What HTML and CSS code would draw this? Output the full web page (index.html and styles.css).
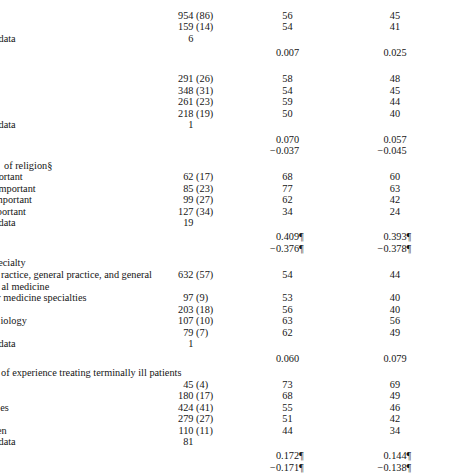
FILE: index.html
```html
<!DOCTYPE html>
<html lang="en">
<head>
<meta charset="utf-8">
<title>Table</title>
<link rel="stylesheet" href="styles.css">
</head>
<body>
<div class="sheet">
  <div class="table">

    <section class="group first">
      <div class="row"><div class="lbl"></div><div class="n">954</div><div class="pct">(86)</div><div class="v">56</div><div class="v">45</div></div>
      <div class="row"><div class="lbl"></div><div class="n">159</div><div class="pct">(14)</div><div class="v">54</div><div class="v">41</div></div>
      <div class="row"><div class="lbl l-data">data</div><div class="n">6</div><div class="pct"></div><div class="v"></div><div class="v"></div></div>
      <div class="stats">
        <div class="row"><div class="lbl"></div><div class="n"></div><div class="pct"></div><div class="v">0.007</div><div class="v">0.025</div></div>
      </div>
    </section>

    <section class="group">
      <div class="title"></div>
      <div class="row"><div class="lbl"></div><div class="n">291</div><div class="pct">(26)</div><div class="v">58</div><div class="v">48</div></div>
      <div class="row"><div class="lbl"></div><div class="n">348</div><div class="pct">(31)</div><div class="v">54</div><div class="v">45</div></div>
      <div class="row"><div class="lbl"></div><div class="n">261</div><div class="pct">(23)</div><div class="v">59</div><div class="v">44</div></div>
      <div class="row"><div class="lbl"></div><div class="n">218</div><div class="pct">(19)</div><div class="v">50</div><div class="v">40</div></div>
      <div class="row"><div class="lbl l-data">data</div><div class="n">1</div><div class="pct"></div><div class="v"></div><div class="v"></div></div>
      <div class="stats">
        <div class="row"><div class="lbl"></div><div class="n"></div><div class="pct"></div><div class="v">0.070</div><div class="v">0.057</div></div>
        <div class="row"><div class="lbl"></div><div class="n"></div><div class="pct"></div><div class="v"><span class="neg">−</span>0.037</div><div class="v"><span class="neg">−</span>0.045</div></div>
      </div>
    </section>

    <section class="group">
      <div class="title t-religion">of religion§</div>
      <div class="row"><div class="lbl l-r1">portant</div><div class="n">62</div><div class="pct">(17)</div><div class="v">68</div><div class="v">60</div></div>
      <div class="row"><div class="lbl l-r2">mportant</div><div class="n">85</div><div class="pct">(23)</div><div class="v">77</div><div class="v">63</div></div>
      <div class="row"><div class="lbl l-r3">mportant</div><div class="n">99</div><div class="pct">(27)</div><div class="v">62</div><div class="v">42</div></div>
      <div class="row"><div class="lbl l-r4">portant</div><div class="n">127</div><div class="pct">(34)</div><div class="v">34</div><div class="v">24</div></div>
      <div class="row"><div class="lbl l-data">data</div><div class="n">19</div><div class="pct"></div><div class="v"></div><div class="v"></div></div>
      <div class="stats">
        <div class="row"><div class="lbl"></div><div class="n"></div><div class="pct"></div><div class="v">0.409<span class="mark">¶</span></div><div class="v">0.393<span class="mark">¶</span></div></div>
        <div class="row"><div class="lbl"></div><div class="n"></div><div class="pct"></div><div class="v"><span class="neg">−</span>0.376<span class="mark">¶</span></div><div class="v"><span class="neg">−</span>0.378<span class="mark">¶</span></div></div>
      </div>
    </section>

    <section class="group">
      <div class="title t-specialty">ecialty</div>
      <div class="row"><div class="lbl l-fp">ractice, general practice, and general<span class="cont">al medicine</span></div><div class="n">632</div><div class="pct">(57)</div><div class="v">54</div><div class="v">44</div></div>
      <div class="row"><div class="lbl l-med">r medicine specialties</div><div class="n">97</div><div class="pct">(9)</div><div class="v">53</div><div class="v">40</div></div>
      <div class="row"><div class="lbl"></div><div class="n">203</div><div class="pct">(18)</div><div class="v">56</div><div class="v">40</div></div>
      <div class="row"><div class="lbl l-iol">iology</div><div class="n">107</div><div class="pct">(10)</div><div class="v">63</div><div class="v">56</div></div>
      <div class="row"><div class="lbl"></div><div class="n">79</div><div class="pct">(7)</div><div class="v">62</div><div class="v">49</div></div>
      <div class="row"><div class="lbl l-data">data</div><div class="n">1</div><div class="pct"></div><div class="v"></div><div class="v"></div></div>
      <div class="stats">
        <div class="row"><div class="lbl"></div><div class="n"></div><div class="pct"></div><div class="v">0.060</div><div class="v">0.079</div></div>
      </div>
    </section>

    <section class="group">
      <div class="title t-exp">of experience treating terminally ill patients</div>
      <div class="row"><div class="lbl"></div><div class="n">45</div><div class="pct">(4)</div><div class="v">73</div><div class="v">69</div></div>
      <div class="row"><div class="lbl"></div><div class="n">180</div><div class="pct">(17)</div><div class="v">68</div><div class="v">49</div></div>
      <div class="row"><div class="lbl l-es">es</div><div class="n">424</div><div class="pct">(41)</div><div class="v">55</div><div class="v">46</div></div>
      <div class="row"><div class="lbl"></div><div class="n">279</div><div class="pct">(27)</div><div class="v">51</div><div class="v">42</div></div>
      <div class="row"><div class="lbl l-en">en</div><div class="n">110</div><div class="pct">(11)</div><div class="v">44</div><div class="v">34</div></div>
      <div class="row"><div class="lbl l-data">data</div><div class="n">81</div><div class="pct"></div><div class="v"></div><div class="v"></div></div>
      <div class="stats">
        <div class="row"><div class="lbl"></div><div class="n"></div><div class="pct"></div><div class="v">0.172<span class="mark">¶</span></div><div class="v">0.144<span class="mark">¶</span></div></div>
        <div class="row"><div class="lbl"></div><div class="n"></div><div class="pct"></div><div class="v"><span class="neg">−</span>0.171<span class="mark">¶</span></div><div class="v"><span class="neg">−</span>0.138<span class="mark">¶</span></div></div>
      </div>
    </section>

  </div>
</div>
</body>
</html>
```

FILE: styles.css
```css
html, body {
  margin: 0;
  padding: 0;
  background: #ffffff;
}

body {
  width: 474px;
  height: 474px;
  overflow: hidden;
  font-family: "Liberation Serif", "Times New Roman", serif;
  font-size: 10.3px;
  line-height: 11.55px;
  color: #151515;
}

.sheet {
  width: 474px;
  height: 474px;
  overflow: hidden;
}

.table {
  margin-left: -10px;
  padding-top: 9.8px;
}

.group + .group {
  margin-top: 2.9px;
}

.stats {
  margin-top: 2.7px;
}

.row {
  display: grid;
  grid-template-columns: 173.5px 30px 64px 60px 155px;
  min-height: 11.55px;
  white-space: nowrap;
  align-items: start;
}

.title {
  height: 11.55px;
  white-space: nowrap;
}

.n {
  text-align: right;
}

.pct {
  padding-left: 2.6px;
}

.v {
  text-align: center;
}

.neg {
  display: inline-block;
  width: 0;
  direction: rtl;
  padding-right: 1.8px;
  margin-right: -1.8px;
}

.mark {
  display: inline-block;
  width: 0;
}

.cont {
  display: block;
  margin-left: 0.5px;
}

/* visible starts of labels, cut by the left edge of the page */
.l-data { padding-left: 8.5px; }
.t-religion { padding-left: 14px; }
.l-r1 { padding-left: 3.5px; }
.l-r2 { padding-left: 8.5px; }
.l-r3 { padding-left: 4.8px; }
.l-r4 { padding-left: 6.8px; }
.t-specialty { padding-left: 8.2px; }
.l-fp { padding-left: 11px; }
.l-med { padding-left: 7.3px; }
.l-iol { padding-left: 10.5px; }
.t-exp { padding-left: 11px; }
.l-es { padding-left: 10.2px; }
.l-en { padding-left: 7px; }
```
